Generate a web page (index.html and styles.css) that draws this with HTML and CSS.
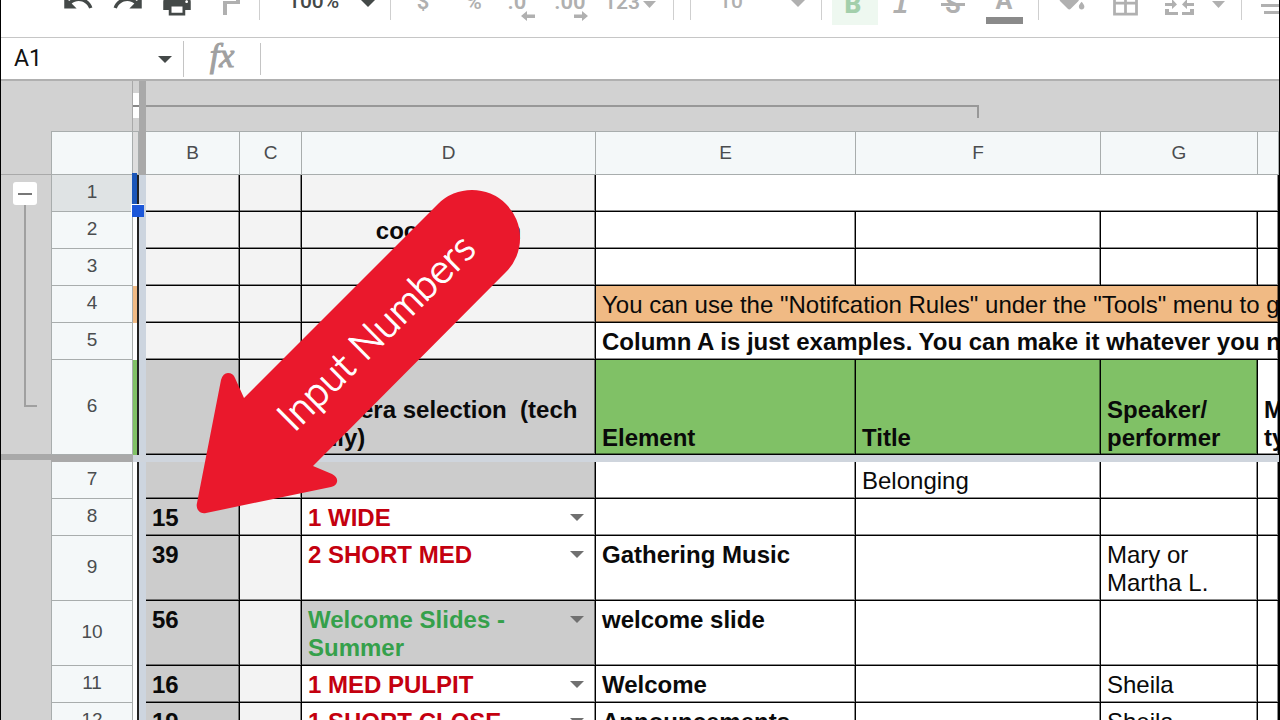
FILE: index.html
```html
<!DOCTYPE html>
<html lang="en">
<head>
<meta charset="utf-8">
<title>Service order sheet</title>
<link rel="stylesheet" href="styles.css">
</head>
<body>
<div class="toolbar" role="toolbar" aria-label="Formatting">
  <button class="tool dark" aria-label="Undo"><svg viewBox="0 0 50 37"><path transform="translate(8.5 -13.5) scale(1.375)" d="M12.500 8c-2.650 0-5.050.990-6.900 2.600L2 7v9h9l-3.620-3.620c1.390-1.160 3.160-1.880 5.120-1.880 3.540 0 6.550 2.310 7.600 5.500l2.370-.780C21.080 11.030 17.150 8 12.500 8z"/></svg></button>
  <button class="tool dark" aria-label="Redo"><svg viewBox="0 0 50 37"><path transform="translate(41.500 -13.500) scale(-1.375 1.375)" d="M12.500 8c-2.650 0-5.050.990-6.900 2.600L2 7v9h9l-3.620-3.620c1.390-1.160 3.160-1.880 5.120-1.880 3.540 0 6.550 2.310 7.600 5.500l2.370-.780C21.080 11.030 17.150 8 12.500 8z"/></svg></button>
  <button class="tool dark" aria-label="Print"><svg viewBox="0 0 50 37"><path transform="translate(7.500 -13.500) scale(1.375)" d="M19 8H5c-1.660 0-3 1.340-3 3v6h4v4h12v-4h4v-6c0-1.660-1.340-3-3-3zm-3 11H8v-4.500h8V19zm3-7c-.550 0-1-.450-1-1s.450-1 1-1 1 .450 1 1-.450 1-1 1z"/></svg></button>
  <button class="tool" aria-label="Paint format"><svg viewBox="0 0 50 37"><path d="M33-3h4v7H24v11h-4V1h13z"/></svg></button>
  <span class="sep"></span>
  <label class="picker dark"><select aria-label="Zoom"><option>100%</option></select><svg class="caret" viewBox="0 0 14 7"><path d="M0 0h14L7 7z"/></svg></label>
  <span class="sep"></span>
  <button class="tool" aria-label="Format as currency"><svg viewBox="0 0 50 37"><text x="26" y="9" class="glyph">$</text></svg></button>
  <button class="tool" aria-label="Format as percent"><svg viewBox="0 0 50 37"><text x="27" y="9" class="glyph small">%</text></svg></button>
  <button class="tool" aria-label="Decrease decimal places"><svg viewBox="0 0 50 37"><text x="20" y="9" class="glyph">.0</text><path d="M24 16l6-5v3.500h8v3.500h-8V21z"/></svg></button>
  <button class="tool" aria-label="Increase decimal places"><svg viewBox="0 0 50 37"><text x="23" y="9" class="glyph">.00</text><path d="M41 16l-6-5v3.500h-8v3.500h8V21z"/></svg></button>
  <button class="tool formats" aria-label="More formats"><svg viewBox="0 0 70 37"><text x="25" y="9" class="glyph small">123</text><path d="M46 1h13l-6.500 7z"/></svg></button>
  <span class="sep"></span>
  <span class="sep wide"></span>
  <label class="picker size"><select aria-label="Font size"><option>10</option></select><svg class="caret" viewBox="0 0 14 7"><path d="M0 0h14L7 7z"/></svg></label>
  <span class="sep"></span>
  <button class="tool bold" aria-label="Bold"><svg viewBox="0 0 50 37"><rect x="4" width="46" height="25" class="pressed"/><text x="25" y="13" class="glyph heavy">B</text></svg></button>
  <button class="tool" aria-label="Italic"><svg viewBox="0 0 50 37"><text x="23" y="13" class="glyph slant">I</text></svg></button>
  <button class="tool" aria-label="Strikethrough"><svg viewBox="0 0 50 37"><text x="25" y="13" class="glyph strike">S</text><path d="M13 3h24v3H13z"/></svg></button>
  <button class="tool" aria-label="Text color"><svg viewBox="0 0 50 37"><text x="26" y="9" class="glyph strike">A</text><path d="M8 17h37v7H8z" fill="#8a8a8a"/></svg></button>
  <span class="sep wide"></span>
  <button class="tool roomy" aria-label="Fill color"><svg viewBox="0 0 54 37"><path transform="translate(10.500 -14) scale(1.375)" d="M16.560 8.940L7.620 0 6.210 1.410l2.380 2.380-5.150 5.150c-.590.590-.590 1.540 0 2.120l5.500 5.500c.290.290.680.440 1.060.440s.770-.150 1.060-.440l5.500-5.500c.590-.580.590-1.530 0-2.120zM19 11.500s-2 2.170-2 3.500c0 1.100.900 2 2 2s2-.900 2-2c0-1.330-2-3.500-2-3.500z"/></svg></button>
  <button class="tool roomy" aria-label="Borders"><svg viewBox="0 0 54 37"><path transform="translate(10 -13.500) scale(1.375)" d="M3 3v18h18V3H3zm8 16H5v-6h6v6zm0-8H5V5h6v6zm8 8h-6v-6h6v6zm0-8h-6V5h6v6z"/></svg></button>
  <button class="tool roomy" aria-label="Merge cells"><svg viewBox="0 0 54 37"><path d="M12 9h4v3h9v3H12zM29 12h8V9h4v6H29zM12 3h7V-1l5 5.500L19 9V6h-7zM41 3h-7V-1l-5 5.500L34 9V6h7z"/></svg></button>
  <button class="tool narrow" aria-label="Merge options"><svg viewBox="0 0 24 37"><path d="M5 1h13l-6.500 7z"/></svg></button>
  <span class="sep wide"></span>
  <button class="tool" aria-label="Horizontal align"><svg viewBox="0 0 50 37"><path d="M13 4h24v3H13zM16 11h24v3H16z"/></svg></button>
</div>

<div class="formula-bar">
  <input class="name-box" aria-label="Name box" value="A1">
  <button class="name-menu" aria-label="Named ranges"><svg viewBox="0 0 14 7"><path d="M0 0h14L7 7z"/></svg></button>
  <span class="rule tall"></span>
  <label class="fx" for="formula">fx</label>
  <span class="rule"></span>
  <input class="formula" id="formula">
</div>

<main class="sheet">
  <aside class="row-groups">
    <div class="corner"></div>
    <div class="group">
      <button class="collapse" aria-label="Collapse rows 1 to 6"></button>
      <div class="bracket"></div>
    </div>
    <div class="frozen-band"></div>
  </aside>
  <div class="grid-side">
    <div class="column-groups">
      <div class="head-space"></div>
      <div class="group-handle"></div>
      <div class="frozen-post"></div>
      <div class="span-line"></div>
    </div>
    <table>
      <colgroup><col class="w-num"><col class="w-a"><col class="w-bar"><col class="w-b"><col class="w-c"><col class="w-d"><col class="w-e"><col class="w-f"><col class="w-g"><col></colgroup>
      <thead>
        <tr class="letters"><th></th><th class="a-head"></th><th class="post"></th><th>B</th><th>C</th><th>D</th><th>E</th><th>F</th><th>G</th><th></th></tr>
      </thead>
      <tbody class="frozen">
        <tr><th class="current">1</th><td class="a selected"><span class="cursor"></span></td><td class="bar"></td><td class="pale"></td><td class="pale"></td><td class="pale"></td><td colspan="4"></td></tr>
        <tr><th>2</th><td class="a"></td><td class="bar"></td><td class="pale"></td><td class="pale"></td><td class="pale strong center">coordination</td><td></td><td></td><td></td><td></td></tr>
        <tr><th>3</th><td class="a"></td><td class="bar"></td><td class="pale"></td><td class="pale"></td><td class="pale"></td><td></td><td></td><td></td><td></td></tr>
        <tr><th>4</th><td class="a orange"></td><td class="bar"></td><td class="pale"></td><td class="pale"></td><td class="pale"></td><td class="orange" colspan="4">You can use the "Notifcation Rules" under the "Tools" menu to get</td></tr>
        <tr><th>5</th><td class="a"></td><td class="bar"></td><td class="pale"></td><td class="pale"></td><td class="pale"></td><td class="strong" colspan="4">Column A is just examples. You can make it whatever you need</td></tr>
        <tr class="titles strong"><th>6</th><td class="a green"></td><td class="bar"></td><td class="gray"></td><td class="pale"></td><td class="gray">Camera selection&nbsp; (tech<br>only)</td><td class="green">Element</td><td class="green">Title</td><td class="green">Speaker/<br>performer</td><td>Media<br>type</td></tr>
      </tbody>
      <tbody>
        <tr class="divider"><th></th><td colspan="9"></td></tr>
        <tr><th>7</th><td class="a"></td><td class="bar"></td><td class="gray"></td><td class="pale"></td><td class="gray"></td><td></td><td>Belonging</td><td></td><td></td></tr>
        <tr><th>8</th><td class="a"></td><td class="bar"></td><td class="gray strong">15</td><td class="pale"></td><td class="strong red"><div class="choice"><span>1 WIDE</span><button aria-label="Choose camera"></button></div></td><td></td><td></td><td></td><td></td></tr>
        <tr class="double"><th>9</th><td class="a"></td><td class="bar"></td><td class="gray strong">39</td><td class="pale"></td><td class="strong red"><div class="choice"><span>2 SHORT MED</span><button aria-label="Choose camera"></button></div></td><td class="strong">Gathering Music</td><td></td><td>Mary or<br>Martha L.</td><td></td></tr>
        <tr class="double"><th>10</th><td class="a"></td><td class="bar"></td><td class="gray strong">56</td><td class="pale"></td><td class="strong gray leaf"><div class="choice"><span>Welcome Slides -<br>Summer</span><button aria-label="Choose camera"></button></div></td><td class="strong">welcome slide</td><td></td><td></td><td></td></tr>
        <tr><th>11</th><td class="a"></td><td class="bar"></td><td class="gray strong">16</td><td class="pale"></td><td class="strong red"><div class="choice"><span>1 MED PULPIT</span><button aria-label="Choose camera"></button></div></td><td class="strong">Welcome</td><td></td><td>Sheila</td><td></td></tr>
        <tr><th>12</th><td class="a"></td><td class="bar"></td><td class="gray strong">19</td><td class="pale"></td><td class="strong red"><div class="choice"><span>1 SHORT CLOSE</span><button aria-label="Choose camera"></button></div></td><td class="strong">Announcements</td><td></td><td>Sheila</td><td></td></tr>
      </tbody>
    </table>
  </div>
  <svg class="callout" viewBox="190 180 340 340" role="img" aria-label="Input Numbers">
    <path d="M244 398L438 204A48 48 0 0 1 506 272L313 466L332 474Q338 477 337 482Q336 486 331 487L206 513Q201 514 198 510Q196 507 197 503L221 380Q223 373 228 373Q233 373 235 378Z"/>
    <text transform="translate(294 433) rotate(-44.700)">Input Numbers</text>
  </svg>
</main>
</body>
</html>
```
FILE: styles.css
```css
* { box-sizing: border-box; }

body {
  margin: 0;
  height: 100vh;
  overflow: hidden;
  display: flex;
  flex-direction: column;
  border: solid #000;
  border-width: 0 1px;
  background: #fff;
  font-family: "Liberation Sans", Arial, sans-serif;
}

button, input, select {
  margin: 0;
  padding: 0;
  border: 0;
  background: none;
  color: inherit;
  font: inherit;
  outline: 0;
}

/* Toolbar */
.toolbar {
  flex: none;
  display: flex;
  height: 38px;
  padding-left: 52px;
  overflow: hidden;
  border-bottom: 1px solid #c6c6c6;
  color: #b0b0b0;
  font-family: Roboto, sans-serif;
}
.toolbar svg { display: block; fill: currentColor; }
.tool { flex: none; width: 50px; height: 37px; }
.tool svg { width: 100%; height: 37px; }
.tool.formats { width: 70px; }
.tool.roomy { width: 54px; }
.tool.narrow { width: 24px; }
.toolbar .dark { color: #444948; }
.toolbar .bold { color: #a3cfab; }
.pressed { fill: #eef8f0; }
.glyph { font-size: 22px; font-weight: 600; text-anchor: middle; }
.small { font-size: 21px; }
.heavy { font-size: 26px; font-weight: 900; }
.slant { font: italic bold 28px "Liberation Mono", monospace; }
.strike { font-size: 25px; font-weight: 700; }
.sep { flex: none; width: 1px; height: 20px; margin: 0 6px; background: #cfcfcf; }
.sep.wide { margin-left: 10px; }
.picker {
  flex: none;
  display: flex;
  justify-content: space-between;
  width: 118px;
  padding: 0 9px 0 22px;
  font-size: 21px;
  font-weight: 500;
}
.picker select { appearance: none; width: 60px; height: 30px; margin-top: -14px; }
.picker .caret { width: 14px; height: 7px; }
.picker.size { padding-right: 10px; }

/* Formula bar */
.formula-bar {
  flex: none;
  display: flex;
  align-items: center;
  height: 43px;
  border-bottom: 2px solid #b0b0b0;
}
.name-box {
  width: 157px;
  padding-left: 13px;
  font: 23px Roboto, sans-serif;
  color: #111;
}
.name-menu { width: 25px; height: 38px; padding-top: 2px; }
.name-menu svg { display: block; width: 14px; height: 7px; fill: #444948; }
.rule { width: 1px; height: 32px; background: #c4c4c4; }
.rule.tall { height: 36px; }
.fx {
  width: 76px;
  padding-bottom: 6px;
  text-align: center;
  font: italic 34px "Liberation Serif", serif;
  line-height: 34px;
  color: #a0a0a0;
  -webkit-text-stroke: 1px #a0a0a0;
}
.formula { flex: 1; min-width: 0; height: 38px; font-size: 23px; }

/* Sheet */
.sheet {
  position: relative;
  flex: 1;
  min-height: 0;
  display: flex;
  overflow: hidden;
  background: #d2d2d2;
}
.row-groups { flex: none; width: 50px; }
.corner { height: 94px; border-bottom: 1px solid #a9a9a9; }
.group { height: 279px; padding: 7px 0 0 12px; }
.collapse {
  display: grid;
  place-items: center;
  width: 24px;
  height: 23px;
  border-radius: 3px;
  background: #fff;
}
.collapse::before { content: ""; width: 14px; height: 2px; background: #777; }
.bracket {
  width: 13px;
  height: 202px;
  margin-left: 11px;
  border: solid #a0a0a0;
  border-width: 0 0 2px 2px;
}
.frozen-band { height: 6px; background: #a9a9a9; }

.grid-side { flex: 1; min-width: 0; }
.column-groups { display: flex; height: 50px; }
.head-space { width: 82px; border-right: 1px solid #a9a9a9; }
.group-handle {
  width: 6px;
  height: 25px;
  margin-top: 12px;
  background: linear-gradient(#fff 0 12px, #888 12px 14px, #fff 14px);
}
.frozen-post { width: 7px; background: #a9a9a9; }
.span-line {
  width: 833px;
  height: 13px;
  margin-top: 24px;
  border: solid #989898;
  border-width: 2px 2px 0 0;
}

table { width: 100%; table-layout: fixed; border-collapse: separate; border-spacing: 0; }
.w-num { width: 82px; }
.w-a { width: 6px; }
.w-bar { width: 7px; }
.w-b { width: 94px; }
.w-c { width: 62px; }
.w-d { width: 294px; }
.w-e { width: 260px; }
.w-f { width: 245px; }
.w-g { width: 157px; }

tr { height: 37px; }
tr.letters { height: 44px; }
tr.titles { height: 95px; }
tr.double { height: 65px; }

th {
  padding: 0 0 2px;
  border: solid #a8adad;
  border-width: 0 1px 1px 0;
  background: #f4f8f9;
  color: #4a4d4f;
  font-size: 19px;
  font-weight: 400;
  line-height: 22px;
}
.letters th { padding: 0; border-top-width: 1px; }
th:first-child { border-left-width: 1px; }
.letters .a-head { background: #dedede; }
.letters .post { border: 0; background: #a9a9a9; }
th.current { background: #dfe3e4; }

td {
  padding: 5px 0 0 6px;
  border: solid #000;
  border-width: 0 1px 1px 0;
  box-shadow: inset -1px -1px 0 rgba(0, 0, 0, .45);
  background: #fff;
  color: #0a0a0a;
  font-size: 24px;
  line-height: 28px;
  vertical-align: top;
  white-space: nowrap;
  overflow: hidden;
}
.frozen td { padding: 0 0 3px 6px; vertical-align: bottom; }
.titles td { padding-bottom: 2px; }
.strong, .strong td { font-weight: 700; }
.frozen td.center { padding-left: 0; text-align: center; }
.pale { background: #f3f3f3; }
.gray { background: #ccc; }
.green { background: #80c166; }
.orange { background: #f0ba84; }
.red { color: #c4000f; }
.leaf { color: #35a04b; }
td.a, .frozen td.a { padding: 0; border: 0; border-right: 2px solid #222; box-shadow: none; }
td.bar, .frozen td.bar { padding: 0; border: 0; box-shadow: none; background: #cdd5df; }
.frozen td.selected { position: relative; overflow: visible; }
.cursor {
  position: absolute;
  z-index: 1;
  inset: -2px 0 6px -1px;
  border: 3px solid #1b56b8;
  border-width: 2px 3px 3px 2px;
  background: #8fb4f0;
}
.cursor::after {
  content: "";
  position: absolute;
  left: -3px;
  bottom: -14px;
  width: 12px;
  height: 12px;
  border: solid #fff;
  border-width: 1px 0 0 1px;
  background: #1c57d9;
}
tr.divider { height: 7px; }
.divider th { padding: 0; border-width: 0; background: #a9a9a9; }
.divider td { padding: 0; border: 0; box-shadow: none; background: #cfd5dd; line-height: 0; }

.choice { display: flex; justify-content: space-between; }
.choice button {
  width: 14px;
  height: 7px;
  margin: 10px 11px 0 0;
  background: #707070;
  clip-path: polygon(0 0, 100% 0, 50% 100%);
}

.callout { position: absolute; left: 189px; top: 99px; width: 340px; height: 340px; }
.callout path { fill: #ea182c; }
.callout text { fill: #fff; stroke: #fff; stroke-width: 1px; font: 300 40px Lato, sans-serif; }
```
